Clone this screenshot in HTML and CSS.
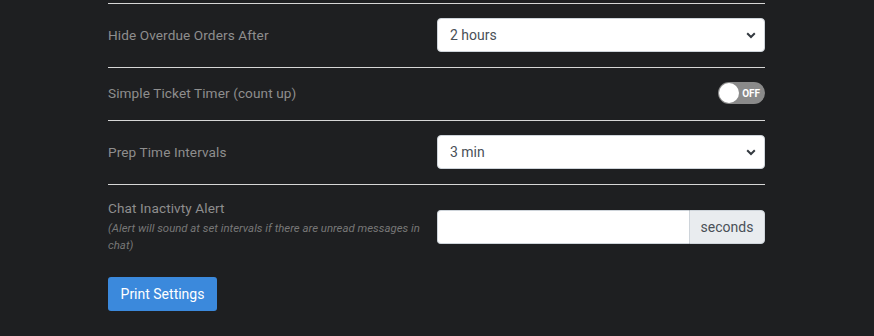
FILE: index.html
```html
<!DOCTYPE html>
<html>
<head>
<meta charset="utf-8">
<link rel="stylesheet" href="styles.css">
</head>
<body>
<div class="settings">
  <div class="row">
    <div class="label">Hide Overdue Orders After</div>
    <div class="control">
      <div class="select-wrap">
        <select class="select"><option>2 hours</option></select>
        <svg class="chev" width="10" height="7" viewBox="0 0 10 7"><path d="M1.2 1.3 L5 5 L8.8 1.3" fill="none" stroke="#343a40" stroke-width="2"/></svg>
      </div>
    </div>
  </div>
  <div class="row row-toggle">
    <div class="label">Simple Ticket Timer (count up)</div>
    <div class="control end">
      <div class="toggle"><span class="knob"></span><span class="toggle-text">OFF</span></div>
    </div>
  </div>
  <div class="row">
    <div class="label">Prep Time Intervals</div>
    <div class="control">
      <div class="select-wrap">
        <select class="select"><option>3 min</option></select>
        <svg class="chev" width="10" height="7" viewBox="0 0 10 7"><path d="M1.2 1.3 L5 5 L8.8 1.3" fill="none" stroke="#343a40" stroke-width="2"/></svg>
      </div>
    </div>
  </div>
  <div class="row">
    <div class="label label-block">Chat Inactivty Alert
      <div class="note">(Alert will sound at set intervals if there are unread messages in chat)</div>
    </div>
    <div class="control">
      <div class="input-group">
        <input class="input" type="text">
        <span class="addon">seconds</span>
      </div>
    </div>
  </div>
  <button class="btn">Print Settings</button>
</div>
</body>
</html>
```
FILE: styles.css
```css
html, body {
  margin: 0;
  padding: 0;
  background: #1e1f21;
}
body {
  font-family: Roboto, "Liberation Sans", sans-serif;
}
.settings {
  margin-left: 108px;
  width: 657px;
  padding-top: 3px;
}
.row {
  border-top: 1px solid #d6d6d6;
  display: grid;
  grid-template-columns: 329px 1fr;
  align-items: center;
  padding: 14px 0 15px;
}
.row-toggle {
  padding-bottom: 16px;
}
.label {
  color: #8e8e8e;
  font-size: 13.6px;
  letter-spacing: 0.1px;
}
.label-block {
  line-height: 19px;
}
.note {
  font-size: 11.4px;
  font-style: italic;
  color: #777;
  line-height: 17px;
  margin-top: 2px;
  padding-right: 6px;
  letter-spacing: 0;
}
.control {
  display: flex;
}
.control.end {
  justify-content: flex-end;
}
.select-wrap {
  position: relative;
  flex: 1;
}
.select {
  appearance: none;
  -webkit-appearance: none;
  width: 100%;
  height: 34px;
  box-sizing: border-box;
  border: 1px solid #ced4da;
  border-radius: 4px;
  background: #fff;
  color: #495057;
  font-family: Roboto, "Liberation Sans", sans-serif;
  font-size: 14px;
  padding: 0 12px;
  margin: 0;
}
.chev {
  position: absolute;
  right: 9px;
  top: 14px;
}
.toggle {
  width: 47px;
  height: 22px;
  border-radius: 11px;
  background: #8a8a8a;
  display: flex;
  align-items: center;
  justify-content: space-between;
  padding: 0 5px 0 1px;
  box-sizing: border-box;
}
.knob {
  width: 20px;
  height: 20px;
  border-radius: 50%;
  background: #fff;
}
.toggle-text {
  color: #fff;
  font-size: 10px;
  font-weight: 700;
}
.input-group {
  flex: 1;
  display: flex;
  height: 34px;
}
.input {
  flex: 1;
  min-width: 0;
  box-sizing: border-box;
  border: 1px solid #ced4da;
  border-right: none;
  border-radius: 4px 0 0 4px;
  background: #fff;
  margin: 0;
  height: 34px;
}
.addon {
  width: 76px;
  box-sizing: border-box;
  display: flex;
  align-items: center;
  justify-content: center;
  background: #e9ecef;
  border: 1px solid #ced4da;
  border-radius: 0 4px 4px 0;
  color: #495057;
  font-size: 14px;
}
.btn {
  margin-top: 8px;
  background: #3b89dc;
  color: #fff;
  border: none;
  border-radius: 3px;
  height: 34px;
  width: 109px;
  font-family: Roboto, "Liberation Sans", sans-serif;
  font-size: 14px;
  padding: 0;
}
```
